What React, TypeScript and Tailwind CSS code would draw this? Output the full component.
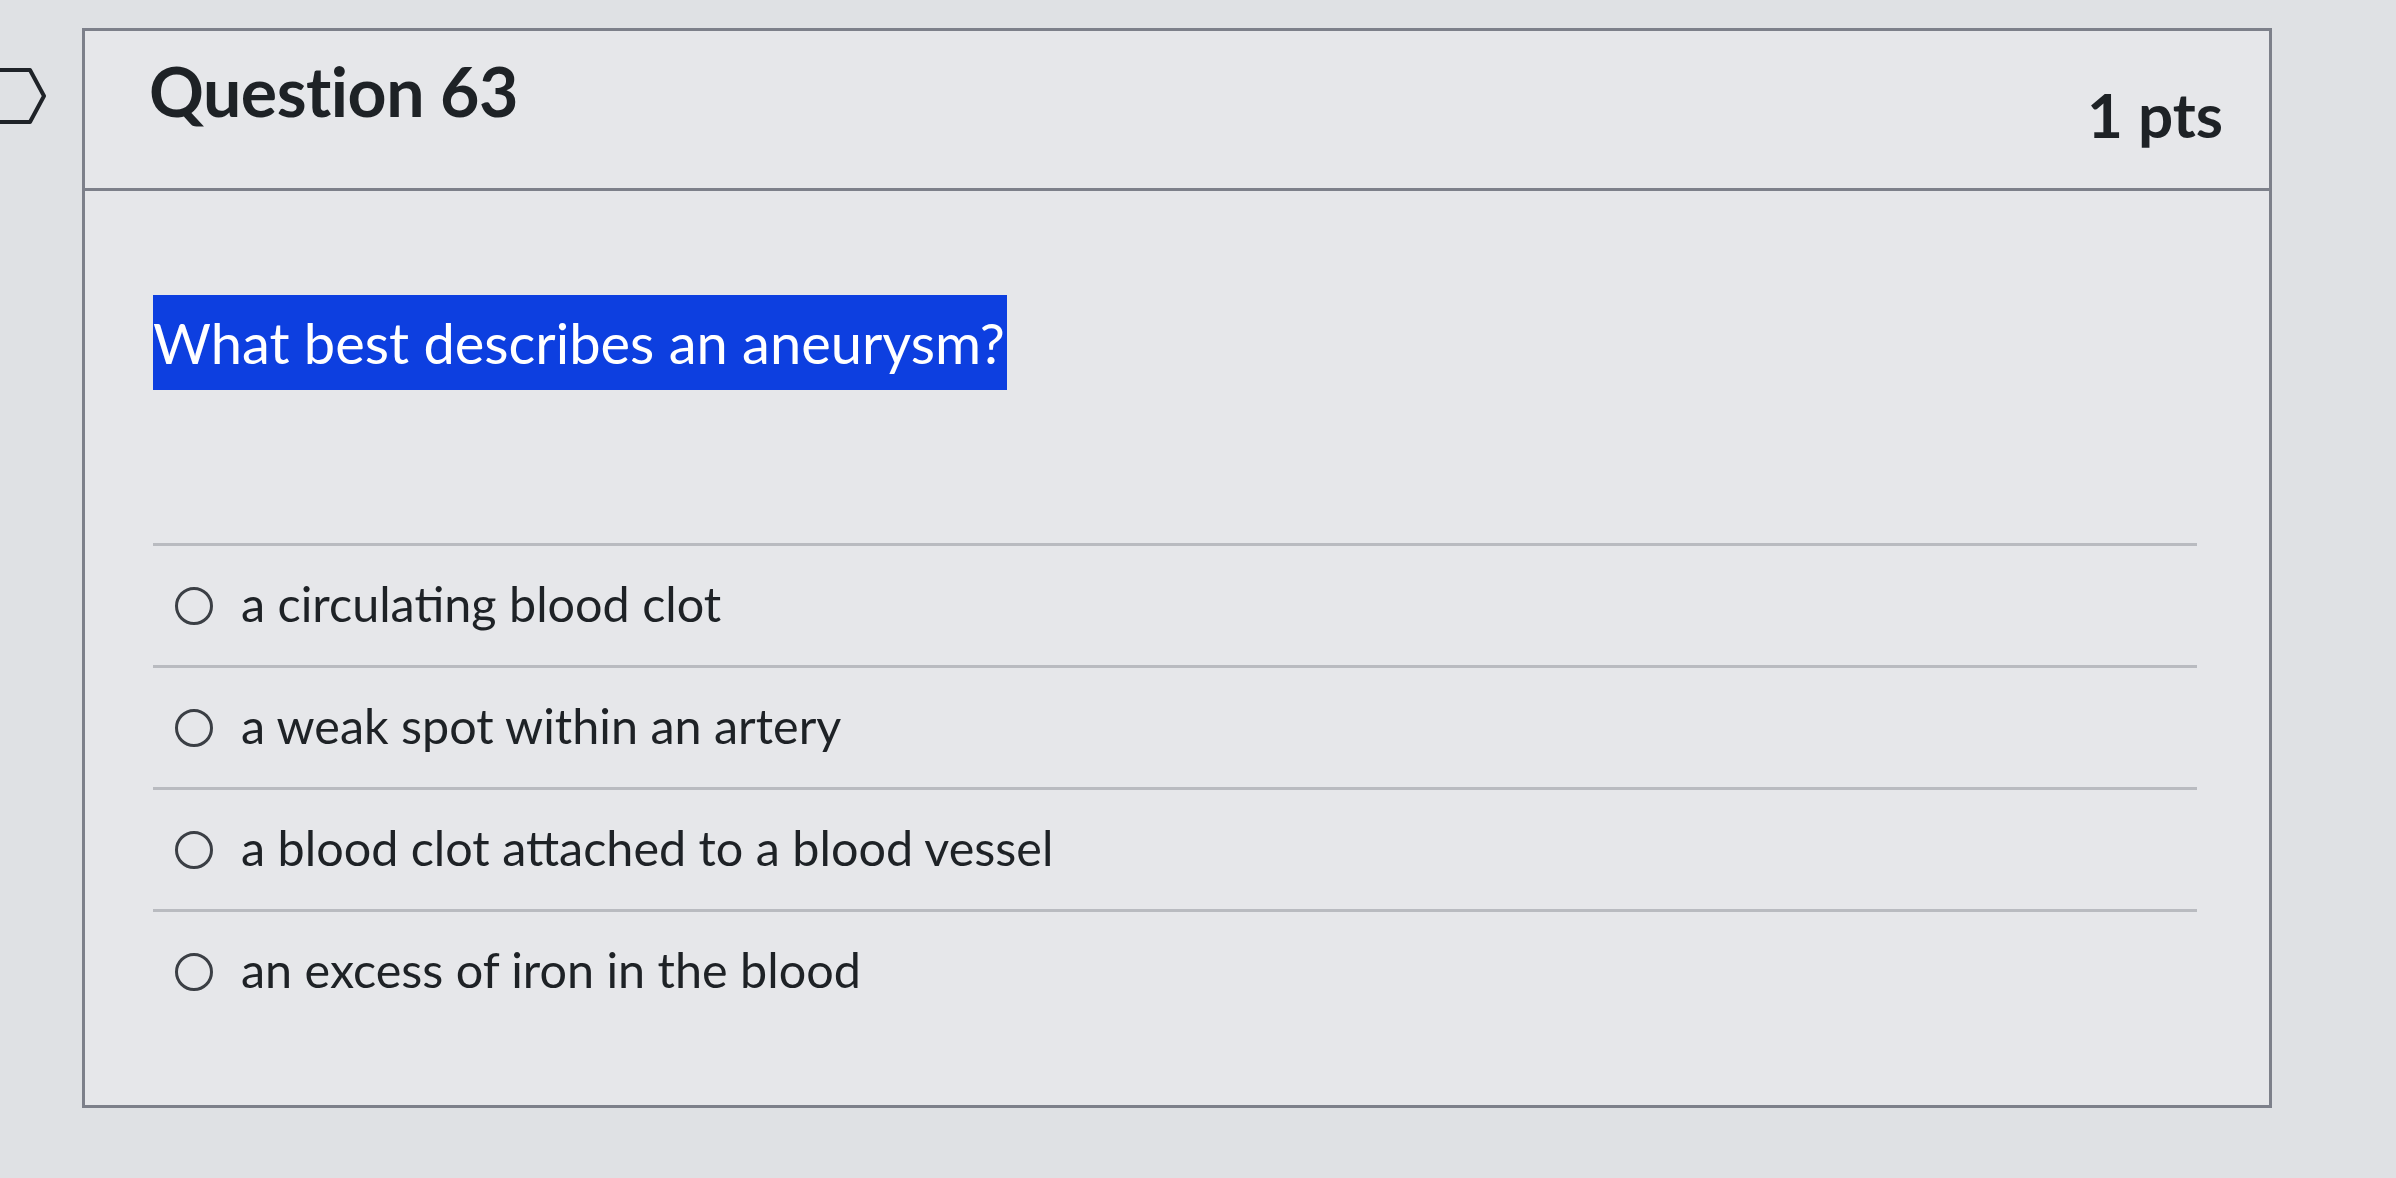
const answers = [
  "a circulating blood clot",
  "a weak spot within an artery",
  "a blood clot attached to a blood vessel",
  "an excess of iron in the blood",
];

function Flag() {
  return (
    <svg width="48" height="58" viewBox="0 0 48 58" fill="none" className="absolute left-0 top-[67px]">
      <path d="M-4 3 H30 L44 29 L30 55 H-4" stroke="#1f2328" strokeWidth="4" strokeLinejoin="round" />
    </svg>
  );
}

export default function App() {
  return (
    <div className="relative w-[2396px] h-[1178px] overflow-hidden bg-[#dfe1e4] font-['Lato','Noto_Sans',sans-serif] text-[#1e2226]">
      <Flag />
      <div className="pl-[82px] pt-[28px]">
        <div className="w-[2190px] h-[1080px] border-[3px] border-[#7d808a] bg-[#e6e7ea] flex flex-col">
          <div className="h-[160px] border-b-[3px] border-[#7d808a] flex justify-between items-start pl-[64px] pr-[46px] pt-[22px]">
            <h2 className="text-[68px] font-bold leading-none tracking-[-0.5px] pt-[4px]">Question 63</h2>
            <span className="text-[62px] font-bold leading-none pt-[30px]">1 pts</span>
          </div>
          <div className="flex-1 pl-[68px] pr-[72px] pt-[124px]">
            <p className="text-[56px] leading-none">
              <span className="bg-[#0d3fe0] text-white py-[14px] pr-[2px]">What best describes an aneurysm?</span>
            </p>
            <div className="mt-[172px]">
              {answers.map((a) => (
                <div key={a} className="h-[122px] border-t-[3px] border-[#b9bbc0] flex items-center pl-[22px] gap-[28px]">
                  <span className="w-[38px] h-[38px] rounded-full border-[3px] border-[#3b3f45] shrink-0" />
                  <span className="text-[48.5px] leading-none pb-[4px]">{a}</span>
                </div>
              ))}
            </div>
          </div>
        </div>
      </div>
    </div>
  );
}
